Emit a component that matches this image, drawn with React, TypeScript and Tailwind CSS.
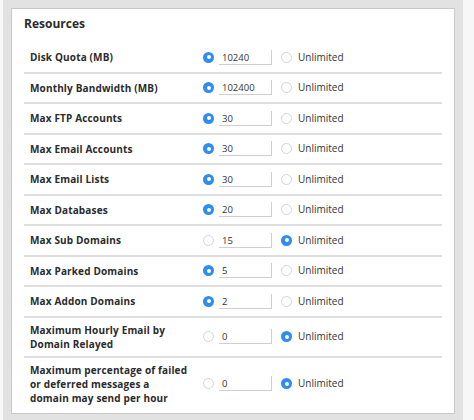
type Row = {
  label: string[];
  value: string;
  unlimited: boolean;
};

const rows: Row[] = [
  { label: ["Disk Quota (MB)"], value: "10240", unlimited: false },
  { label: ["Monthly Bandwidth (MB)"], value: "102400", unlimited: false },
  { label: ["Max FTP Accounts"], value: "30", unlimited: false },
  { label: ["Max Email Accounts"], value: "30", unlimited: false },
  { label: ["Max Email Lists"], value: "30", unlimited: false },
  { label: ["Max Databases"], value: "20", unlimited: false },
  { label: ["Max Sub Domains"], value: "15", unlimited: true },
  { label: ["Max Parked Domains"], value: "5", unlimited: false },
  { label: ["Max Addon Domains"], value: "2", unlimited: false },
  { label: ["Maximum Hourly Email by", "Domain Relayed"], value: "0", unlimited: true },
  {
    label: ["Maximum percentage of failed", "or deferred messages a", "domain may send per hour"],
    value: "0",
    unlimited: true
  }
];

function Radio({ checked }: { checked: boolean }) {
  return checked ? (
    <span className="flex h-[11px] w-[11px] shrink-0 items-center justify-center rounded-full bg-[#2f8cf0]">
      <span className="h-[4px] w-[4px] rounded-full bg-white" />
    </span>
  ) : (
    <span className="block h-[11px] w-[11px] shrink-0 rounded-full border border-[#d4d4d4] bg-white" />
  );
}

export default function App() {
  return (
    <div className="h-[420px] w-[474px] overflow-hidden bg-[#f7f7f7] pl-[3px] pr-[11px] font-['Open_Sans',sans-serif] text-[#2b2b2b]">
      <div className="h-full bg-[#e2e2e2] px-[8px] pt-[8px] pb-[6px]">
        <div className="h-full border border-[#c9c9c9] bg-white px-[12px] pt-[6px]">
          <h2 className="text-[12px] font-bold leading-[17px]">Resources</h2>
          <div className="mt-[11px]">
            {rows.map((row, i) => (
              <div
                key={row.label.join(" ")}
                className={`flex min-h-[30.5px] items-center py-[5px] leading-none ${
                  i < rows.length - 1 ? "border-b-2 border-[#dedede]" : ""
                }`}
              >
                <div className="w-[179px] whitespace-nowrap pl-[6px] text-[10px] font-bold leading-[14px] tracking-[0.15px]">
                  {row.label.map((l) => (
                    <div key={l}>{l}</div>
                  ))}
                </div>
                <Radio checked={!row.unlimited} />
                <div className="ml-[5px] flex h-[15px] w-[53px] items-end border-r border-b border-[#cfcfcf] pl-[3px] text-[9.5px] leading-[13px] text-[#333]">
                  {row.value}
                </div>
                <span className="ml-[9px] flex">
                  <Radio checked={row.unlimited} />
                </span>
                <span className="ml-[6px] text-[10px] leading-[13px] text-[#333]">Unlimited</span>
              </div>
            ))}
          </div>
        </div>
      </div>
    </div>
  );
}
